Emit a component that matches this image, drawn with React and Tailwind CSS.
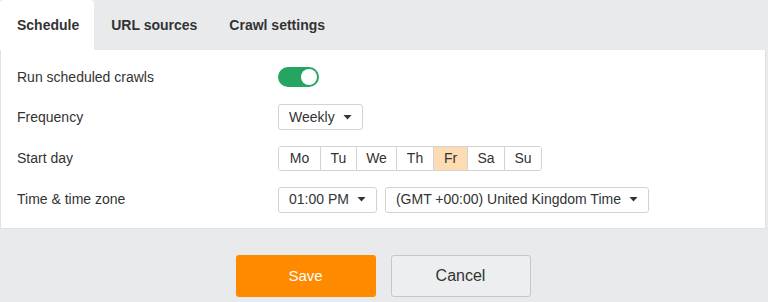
import React, { useState } from 'react'

const DAYS = [
  { d: 'Mo', w: 'w-[41px]' },
  { d: 'Tu', w: 'w-[36px]' },
  { d: 'We', w: 'w-[40px]' },
  { d: 'Th', w: 'w-[37px]' },
  { d: 'Fr', w: 'w-[34px]' },
  { d: 'Sa', w: 'w-[37px]' },
  { d: 'Su', w: 'w-[37px]' }
]
const TABS = ['Schedule', 'URL sources', 'Crawl settings']

function Caret() {
  return (
    <svg width="9" height="5" viewBox="0 0 9 5" className="shrink-0">
      <path d="M0.5 0h8L4.5 4.5z" fill="#333" />
    </svg>
  )
}

function Select({ value }) {
  return (
    <button className="h-[26px] flex items-center gap-[8px] px-[10px] bg-white border border-[#d3d3d3] rounded-[3px] text-[14px] text-[#333]">
      <span>{value}</span>
      <Caret />
    </button>
  )
}

function Row({ label, h, children }) {
  return (
    <div className={`flex items-center ${h}`}>
      <div className="w-[261px] text-[14px] text-[#333]">{label}</div>
      {children}
    </div>
  )
}

export default function App() {
  const [tab, setTab] = useState('Schedule')
  const [on, setOn] = useState(true)
  const [day, setDay] = useState('Fr')

  return (
    <div className="w-[768px] h-[302px] bg-[#e9eaec] overflow-hidden" style={{ fontFamily: '"Liberation Sans", Arial, sans-serif' }}>
      {/* Tabs */}
      <div className="flex h-[50px]">
        {TABS.map(t => (
          <button key={t} onClick={() => setTab(t)}
            className={`h-full pl-[17px] pr-[15px] text-[14px] font-bold text-[#333] rounded-t-[4px] ${tab === t ? 'bg-white' : ''}`}>
            {t}
          </button>
        ))}
      </div>

      {/* Panel */}
      <div className="w-[766px] h-[179px] bg-white border-l border-r border-b border-[#e1e2e4] pl-[16px] pt-[7px]">
        <Row label="Run scheduled crawls" h="h-[40px]">
          <button onClick={() => setOn(!on)}
            className={`w-[41px] h-[20px] rounded-full flex items-center px-[2px] ${on ? 'bg-[#26a562] justify-end' : 'bg-[#ccc] justify-start'}`}>
            <span className="w-[16px] h-[16px] rounded-full bg-white" />
          </button>
        </Row>
        <Row label="Frequency" h="h-[40px]">
          <Select value="Weekly" />
        </Row>
        <Row label="Start day" h="h-[42px]">
          <div className="flex h-[25px] border border-[#d3d3d3] rounded-[3px] overflow-hidden">
            {DAYS.map(({ d, w }, i) => (
              <button key={d} onClick={() => setDay(d)}
                className={`h-full ${w} text-[14px] text-[#333] ${i > 0 ? 'border-l border-[#d3d3d3]' : ''} ${day === d ? 'bg-[#fddcb3]' : 'bg-white'}`}>
                {d}
              </button>
            ))}
          </div>
        </Row>
        <Row label="Time & time zone" h="h-[41px]">
          <div className="flex gap-[8px]">
            <Select value="01:00 PM" />
            <Select value="(GMT +00:00) United Kingdom Time" />
          </div>
        </Row>
      </div>

      {/* Actions */}
      <div className="flex justify-center gap-[15px] pt-[26px] pr-[2px]">
        <button className="w-[140px] h-[42px] rounded-[3px] bg-[#ff8a00] text-white text-[15px]">Save</button>
        <button className="w-[140px] h-[42px] rounded-[3px] bg-[#eceef0] border border-[#c6c7c9] text-[#333] text-[16px]">Cancel</button>
      </div>
    </div>
  )
}
